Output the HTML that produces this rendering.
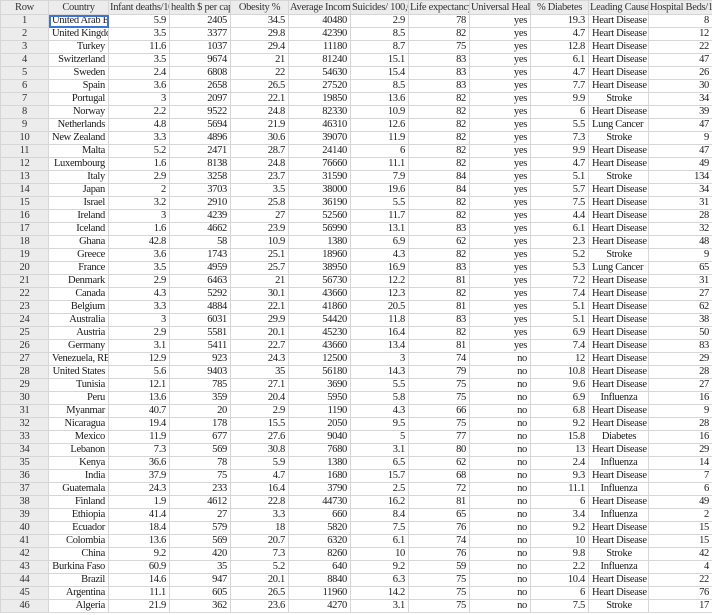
<!DOCTYPE html>
<html><head><meta charset="utf-8">
<style>
html,body{margin:0;padding:0;background:#fff;width:712px;height:615px;overflow:hidden}
table{border-collapse:collapse;table-layout:fixed;width:712px;font-family:"Liberation Serif",serif;font-size:10.5px;letter-spacing:-0.3px;color:#1a1a1a;border-top:1px solid #5b8de0}
td,th{border:1px solid #d6d6d6;height:12px;line-height:12px;padding:0 3px;white-space:nowrap;overflow:hidden;text-align:right;font-weight:normal}
th{height:13px;background:#ececec;text-align:center;color:#333;padding:0 1px;text-overflow:clip}
td:first-child{background:#ececec;text-align:center;color:#333}
td:nth-child(11){text-align:left;padding-left:3px;padding-right:0}
td:nth-child(11).c{text-align:center;padding-left:1px}
td.sel{outline:2px solid #3f73d8;outline-offset:-2px;text-align:left}
</style></head><body>
<table>
<colgroup><col style="width:48px"><col style="width:60px"><col style="width:61px"><col style="width:61px"><col style="width:58px"><col style="width:62px"><col style="width:58px"><col style="width:61px"><col style="width:61px"><col style="width:58px"><col style="width:60px"><col style="width:64px"></colgroup>
<tr><th>Row</th><th>Country</th><th>Infant deaths/1000</th><th>health $ per capita</th><th>Obesity %</th><th>Average Income</th><th>Suicides/ 100,000</th><th>Life expectancy</th><th>Universal Health</th><th>% Diabetes</th><th>Leading Cause</th><th>Hospital Beds/10000</th></tr>
<tr><td>1</td><td class="sel">United Arab Emirates</td><td>5.9</td><td>2405</td><td>34.5</td><td>40480</td><td>2.9</td><td>78</td><td>yes</td><td>19.3</td><td>Heart Disease</td><td>8</td></tr>
<tr><td>2</td><td style="text-align:left">United Kingdom</td><td>3.5</td><td>3377</td><td>29.8</td><td>42390</td><td>8.5</td><td>82</td><td>yes</td><td>4.7</td><td>Heart Disease</td><td>12</td></tr>
<tr><td>3</td><td>Turkey</td><td>11.6</td><td>1037</td><td>29.4</td><td>11180</td><td>8.7</td><td>75</td><td>yes</td><td>12.8</td><td>Heart Disease</td><td>22</td></tr>
<tr><td>4</td><td>Switzerland</td><td>3.5</td><td>9674</td><td>21</td><td>81240</td><td>15.1</td><td>83</td><td>yes</td><td>6.1</td><td>Heart Disease</td><td>47</td></tr>
<tr><td>5</td><td>Sweden</td><td>2.4</td><td>6808</td><td>22</td><td>54630</td><td>15.4</td><td>83</td><td>yes</td><td>4.7</td><td>Heart Disease</td><td>26</td></tr>
<tr><td>6</td><td>Spain</td><td>3.6</td><td>2658</td><td>26.5</td><td>27520</td><td>8.5</td><td>83</td><td>yes</td><td>7.7</td><td>Heart Disease</td><td>30</td></tr>
<tr><td>7</td><td>Portugal</td><td>3</td><td>2097</td><td>22.1</td><td>19850</td><td>13.6</td><td>82</td><td>yes</td><td>9.9</td><td class="c">Stroke</td><td>34</td></tr>
<tr><td>8</td><td>Norway</td><td>2.2</td><td>9522</td><td>24.8</td><td>82330</td><td>10.9</td><td>82</td><td>yes</td><td>6</td><td>Heart Disease</td><td>39</td></tr>
<tr><td>9</td><td>Netherlands</td><td>4.8</td><td>5694</td><td>21.9</td><td>46310</td><td>12.6</td><td>82</td><td>yes</td><td>5.5</td><td>Lung Cancer</td><td>47</td></tr>
<tr><td>10</td><td>New Zealand</td><td>3.3</td><td>4896</td><td>30.6</td><td>39070</td><td>11.9</td><td>82</td><td>yes</td><td>7.3</td><td class="c">Stroke</td><td>9</td></tr>
<tr><td>11</td><td>Malta</td><td>5.2</td><td>2471</td><td>28.7</td><td>24140</td><td>6</td><td>82</td><td>yes</td><td>9.9</td><td>Heart Disease</td><td>47</td></tr>
<tr><td>12</td><td>Luxembourg</td><td>1.6</td><td>8138</td><td>24.8</td><td>76660</td><td>11.1</td><td>82</td><td>yes</td><td>4.7</td><td>Heart Disease</td><td>49</td></tr>
<tr><td>13</td><td>Italy</td><td>2.9</td><td>3258</td><td>23.7</td><td>31590</td><td>7.9</td><td>84</td><td>yes</td><td>5.1</td><td class="c">Stroke</td><td>134</td></tr>
<tr><td>14</td><td>Japan</td><td>2</td><td>3703</td><td>3.5</td><td>38000</td><td>19.6</td><td>84</td><td>yes</td><td>5.7</td><td>Heart Disease</td><td>34</td></tr>
<tr><td>15</td><td>Israel</td><td>3.2</td><td>2910</td><td>25.8</td><td>36190</td><td>5.5</td><td>82</td><td>yes</td><td>7.5</td><td>Heart Disease</td><td>31</td></tr>
<tr><td>16</td><td>Ireland</td><td>3</td><td>4239</td><td>27</td><td>52560</td><td>11.7</td><td>82</td><td>yes</td><td>4.4</td><td>Heart Disease</td><td>28</td></tr>
<tr><td>17</td><td>Iceland</td><td>1.6</td><td>4662</td><td>23.9</td><td>56990</td><td>13.1</td><td>83</td><td>yes</td><td>6.1</td><td>Heart Disease</td><td>32</td></tr>
<tr><td>18</td><td>Ghana</td><td>42.8</td><td>58</td><td>10.9</td><td>1380</td><td>6.9</td><td>62</td><td>yes</td><td>2.3</td><td>Heart Disease</td><td>48</td></tr>
<tr><td>19</td><td>Greece</td><td>3.6</td><td>1743</td><td>25.1</td><td>18960</td><td>4.3</td><td>82</td><td>yes</td><td>5.2</td><td class="c">Stroke</td><td>9</td></tr>
<tr><td>20</td><td>France</td><td>3.5</td><td>4959</td><td>25.7</td><td>38950</td><td>16.9</td><td>83</td><td>yes</td><td>5.3</td><td>Lung Cancer</td><td>65</td></tr>
<tr><td>21</td><td>Denmark</td><td>2.9</td><td>6463</td><td>21</td><td>56730</td><td>12.2</td><td>81</td><td>yes</td><td>7.2</td><td>Heart Disease</td><td>31</td></tr>
<tr><td>22</td><td>Canada</td><td>4.3</td><td>5292</td><td>30.1</td><td>43660</td><td>12.3</td><td>82</td><td>yes</td><td>7.4</td><td>Heart Disease</td><td>27</td></tr>
<tr><td>23</td><td>Belgium</td><td>3.3</td><td>4884</td><td>22.1</td><td>41860</td><td>20.5</td><td>81</td><td>yes</td><td>5.1</td><td>Heart Disease</td><td>62</td></tr>
<tr><td>24</td><td>Australia</td><td>3</td><td>6031</td><td>29.9</td><td>54420</td><td>11.8</td><td>83</td><td>yes</td><td>5.1</td><td>Heart Disease</td><td>38</td></tr>
<tr><td>25</td><td>Austria</td><td>2.9</td><td>5581</td><td>20.1</td><td>45230</td><td>16.4</td><td>82</td><td>yes</td><td>6.9</td><td>Heart Disease</td><td>50</td></tr>
<tr><td>26</td><td>Germany</td><td>3.1</td><td>5411</td><td>22.7</td><td>43660</td><td>13.4</td><td>81</td><td>yes</td><td>7.4</td><td>Heart Disease</td><td>83</td></tr>
<tr><td>27</td><td>Venezuela, RB</td><td>12.9</td><td>923</td><td>24.3</td><td>12500</td><td>3</td><td>74</td><td>no</td><td>12</td><td>Heart Disease</td><td>29</td></tr>
<tr><td>28</td><td>United States</td><td>5.6</td><td>9403</td><td>35</td><td>56180</td><td>14.3</td><td>79</td><td>no</td><td>10.8</td><td>Heart Disease</td><td>28</td></tr>
<tr><td>29</td><td>Tunisia</td><td>12.1</td><td>785</td><td>27.1</td><td>3690</td><td>5.5</td><td>75</td><td>no</td><td>9.6</td><td>Heart Disease</td><td>27</td></tr>
<tr><td>30</td><td>Peru</td><td>13.6</td><td>359</td><td>20.4</td><td>5950</td><td>5.8</td><td>75</td><td>no</td><td>6.9</td><td class="c">Influenza</td><td>16</td></tr>
<tr><td>31</td><td>Myanmar</td><td>40.7</td><td>20</td><td>2.9</td><td>1190</td><td>4.3</td><td>66</td><td>no</td><td>6.8</td><td>Heart Disease</td><td>9</td></tr>
<tr><td>32</td><td>Nicaragua</td><td>19.4</td><td>178</td><td>15.5</td><td>2050</td><td>9.5</td><td>75</td><td>no</td><td>9.2</td><td>Heart Disease</td><td>28</td></tr>
<tr><td>33</td><td>Mexico</td><td>11.9</td><td>677</td><td>27.6</td><td>9040</td><td>5</td><td>77</td><td>no</td><td>15.8</td><td class="c">Diabetes</td><td>16</td></tr>
<tr><td>34</td><td>Lebanon</td><td>7.3</td><td>569</td><td>30.8</td><td>7680</td><td>3.1</td><td>80</td><td>no</td><td>13</td><td>Heart Disease</td><td>29</td></tr>
<tr><td>35</td><td>Kenya</td><td>36.6</td><td>78</td><td>5.9</td><td>1380</td><td>6.5</td><td>62</td><td>no</td><td>2.4</td><td class="c">Influenza</td><td>14</td></tr>
<tr><td>36</td><td>India</td><td>37.9</td><td>75</td><td>4.7</td><td>1680</td><td>15.7</td><td>68</td><td>no</td><td>9.3</td><td>Heart Disease</td><td>7</td></tr>
<tr><td>37</td><td>Guatemala</td><td>24.3</td><td>233</td><td>16.4</td><td>3790</td><td>2.5</td><td>72</td><td>no</td><td>11.1</td><td class="c">Influenza</td><td>6</td></tr>
<tr><td>38</td><td>Finland</td><td>1.9</td><td>4612</td><td>22.8</td><td>44730</td><td>16.2</td><td>81</td><td>no</td><td>6</td><td>Heart Disease</td><td>49</td></tr>
<tr><td>39</td><td>Ethiopia</td><td>41.4</td><td>27</td><td>3.3</td><td>660</td><td>8.4</td><td>65</td><td>no</td><td>3.4</td><td class="c">Influenza</td><td>2</td></tr>
<tr><td>40</td><td>Ecuador</td><td>18.4</td><td>579</td><td>18</td><td>5820</td><td>7.5</td><td>76</td><td>no</td><td>9.2</td><td>Heart Disease</td><td>15</td></tr>
<tr><td>41</td><td>Colombia</td><td>13.6</td><td>569</td><td>20.7</td><td>6320</td><td>6.1</td><td>74</td><td>no</td><td>10</td><td>Heart Disease</td><td>15</td></tr>
<tr><td>42</td><td>China</td><td>9.2</td><td>420</td><td>7.3</td><td>8260</td><td>10</td><td>76</td><td>no</td><td>9.8</td><td class="c">Stroke</td><td>42</td></tr>
<tr><td>43</td><td>Burkina Faso</td><td>60.9</td><td>35</td><td>5.2</td><td>640</td><td>9.2</td><td>59</td><td>no</td><td>2.2</td><td class="c">Influenza</td><td>4</td></tr>
<tr><td>44</td><td>Brazil</td><td>14.6</td><td>947</td><td>20.1</td><td>8840</td><td>6.3</td><td>75</td><td>no</td><td>10.4</td><td>Heart Disease</td><td>22</td></tr>
<tr><td>45</td><td>Argentina</td><td>11.1</td><td>605</td><td>26.5</td><td>11960</td><td>14.2</td><td>75</td><td>no</td><td>6</td><td>Heart Disease</td><td>76</td></tr>
<tr><td>46</td><td>Algeria</td><td>21.9</td><td>362</td><td>23.6</td><td>4270</td><td>3.1</td><td>75</td><td>no</td><td>7.5</td><td class="c">Stroke</td><td>17</td></tr>
</table>
</body></html>
